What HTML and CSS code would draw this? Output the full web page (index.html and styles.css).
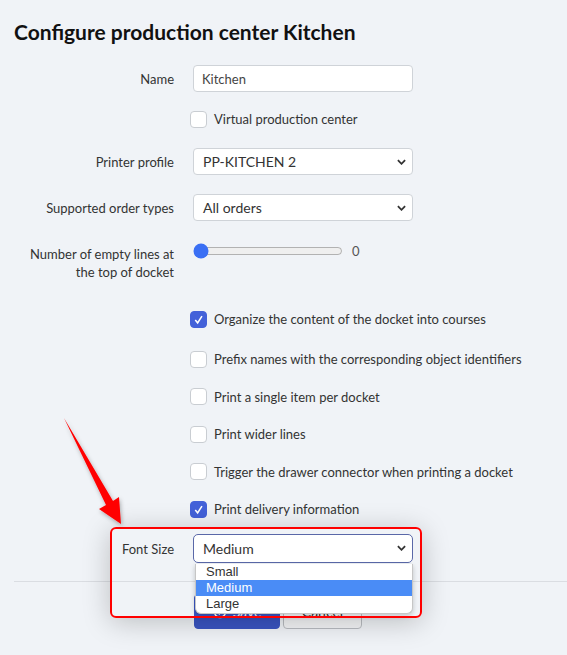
FILE: index.html
```html
<!DOCTYPE html>
<html lang="en">
<head>
    <meta charset="UTF-8">
    <title>Configure production center</title>
    <link rel="stylesheet" href="styles.css">
</head>
<body>
    <h1 class="title">Configure production center Kitchen</h1>

    <form class="form">
        <div class="row row-name">
            <label class="label">Name</label>
            <input class="field" type="text" value="Kitchen">
        </div>
        <div class="row row-check row-virtual">
            <span></span>
            <label class="check"><span class="box"></span>Virtual production center</label>
        </div>
        <div class="row row-select">
            <label class="label">Printer profile</label>
            <div class="select-wrap">
                <div class="field select">PP-KITCHEN 2</div>
                <svg class="chevron" viewBox="0 0 10 6"><path d="M1 1l4 4 4-4" fill="none" stroke="#333" stroke-width="2"/></svg>
            </div>
        </div>
        <div class="row row-select row-orders">
            <label class="label">Supported order types</label>
            <div class="select-wrap">
                <div class="field select">All orders</div>
                <svg class="chevron" viewBox="0 0 10 6"><path d="M1 1l4 4 4-4" fill="none" stroke="#333" stroke-width="2"/></svg>
            </div>
        </div>
        <div class="row row-slider">
            <label class="label">Number of empty lines at the top of docket</label>
            <div class="slider">
                <input class="range" type="range" min="0" max="10" value="0">
                <span class="range-value">0</span>
            </div>
        </div>

        <div class="row row-check row-first">
            <span></span>
            <label class="check"><span class="box checked"><svg viewBox="0 0 12 12"><path d="M3 6.5l2.2 2.6L9.2 2.8" fill="none" stroke="#fff" stroke-width="1.4"/></svg></span>Organize the content of the docket into courses</label>
        </div>
        <div class="row row-check">
            <span></span>
            <label class="check"><span class="box"></span>Prefix names with the corresponding object identifiers</label>
        </div>
        <div class="row row-check">
            <span></span>
            <label class="check"><span class="box"></span>Print a single item per docket</label>
        </div>
        <div class="row row-check">
            <span></span>
            <label class="check"><span class="box"></span>Print wider lines</label>
        </div>
        <div class="row row-check">
            <span></span>
            <label class="check"><span class="box"></span>Trigger the drawer connector when printing a docket</label>
        </div>
        <div class="row row-check row-last">
            <span></span>
            <label class="check"><span class="box checked"><svg viewBox="0 0 12 12"><path d="M3 6.5l2.2 2.6L9.2 2.8" fill="none" stroke="#fff" stroke-width="1.4"/></svg></span>Print delivery information</label>
        </div>
        <div class="row row-font">
            <label class="label">Font Size</label>
            <div class="select-wrap">
                <div class="field select focused">Medium</div>
                <svg class="chevron" viewBox="0 0 10 6"><path d="M1 1l4 4 4-4" fill="none" stroke="#333" stroke-width="2"/></svg>
                <ul class="dropdown">
                    <li>Small</li>
                    <li class="active">Medium</li>
                    <li>Large</li>
                </ul>
            </div>
        </div>
    </form>

    <div class="actions">
        <button class="btn btn-save" type="button">
            <svg viewBox="0 0 14 14"><circle cx="7" cy="7" r="5.5" fill="none" stroke="#fff" stroke-width="1.6"/><path d="M4.5 7l1.8 1.8L9.6 5.4" fill="none" stroke="#fff" stroke-width="1.6"/></svg>
            Save
        </button>
        <button class="btn btn-cancel" type="button">Cancel</button>
    </div>

    <!-- Anotación de la captura -->
    <div class="highlight"></div>
    <svg class="arrow" width="130" height="130" viewBox="0 0 130 130">
        <defs>
            <filter id="sombra" x="-30%" y="-30%" width="160%" height="160%">
                <feDropShadow dx="1" dy="2" stdDeviation="2" flood-color="#000" flood-opacity="0.3"/>
            </filter>
        </defs>
        <polygon filter="url(#sombra)" fill="#ff0000"
                 points="24,18 73,101 79,97 81,124 59,109 66,105"/>
    </svg>
</body>
</html>
```

FILE: styles.css
```css
/* Estilos generales */
body {
    font-family: Lato, "Open Sans", sans-serif;
    background-color: #f0f3f7;
    color: #333;
    margin: 0;
    padding: 19px 0 0 14px;
    height: 636px;
    overflow: hidden;
    position: relative;
}

.title {
    font-size: 21px;
    line-height: 26px;
    font-weight: 700;
    color: #111;
    margin: 0 0 20px;
}

/* Filas del formulario */
.form {
    margin: 0;
}
.row {
    display: grid;
    grid-template-columns: 160px 220px;
    column-gap: 19px;
    align-items: center;
    margin-bottom: 17.5px;
}
.label {
    font-size: 13px;
    line-height: 18px;
    text-align: right;
    color: #333;
}

.field {
    box-sizing: border-box;
    width: 220px;
    height: 27px;
    border: 1px solid #cfd3d8;
    border-radius: 4px;
    background: #fff;
    font-family: Lato, sans-serif;
    font-size: 13px;
    color: #444;
    padding: 0 8px;
    margin: 0;
}

.row-name {
    margin-bottom: 17px;
}
.row-virtual {
    margin-bottom: 19px;
}
.row-select {
    margin-bottom: 19px;
}
.row-orders {
    margin-bottom: 24px;
}

/* Selects */
.select-wrap {
    position: relative;
    width: 220px;
}
.select {
    display: flex;
    align-items: center;
    padding-left: 9px;
    font-size: 14px;
    color: #333;
}
.select.focused {
    height: 29px;
    border-color: #5a68a8;
    border-radius: 5px;
}
.chevron {
    position: absolute;
    right: 7px;
    top: 11px;
    width: 9px;
    height: 6px;
}

/* Deslizador */
.row-slider {
    align-items: start;
    margin-bottom: 28px;
}
.slider {
    display: flex;
    align-items: center;
    gap: 9px;
    margin-top: -2px;
}
.range {
    width: 150px;
    height: 16px;
    margin: 0;
    accent-color: #3a6ff4;
}
.range-value {
    font-size: 13px;
    color: #555;
}

/* Casillas */
.row-check {
    line-height: 20px;
}
.row-first {
    margin-bottom: 20px;
}
.row-check.row-last {
    margin-bottom: 15px;
}
.check {
    display: flex;
    align-items: center;
    gap: 7px;
    font-size: 13px;
    color: #333;
    margin-left: -3px;
    white-space: nowrap;
}
.box {
    box-sizing: border-box;
    width: 17px;
    height: 17px;
    border: 1px solid #c9cdd2;
    border-radius: 4px;
    background: #fff;
    display: flex;
    align-items: center;
    justify-content: center;
    flex: none;
}
.box.checked {
    background: #4361d9;
    border-color: #4361d9;
}
.box svg {
    width: 13px;
    height: 13px;
}

.row-font {
    margin-bottom: 0;
}

/* Lista desplegada */
.dropdown {
    position: absolute;
    left: 2px;
    top: 30px;
    width: 218px;
    box-sizing: border-box;
    margin: 0;
    padding: 0 0 1px;
    list-style: none;
    background: #fff;
    border: 1px solid #c6c6c6;
    border-top: none;
    border-radius: 0 0 6px 6px;
    box-shadow: 0 2px 5px rgba(0, 0, 0, 0.2);
    font-family: "Liberation Sans", Arial, sans-serif;
    font-size: 13px;
    z-index: 3;
}
.dropdown li {
    height: 16px;
    line-height: 16px;
    padding-left: 10px;
    color: #333;
}
.dropdown li.active {
    background: #4a8cf6;
    color: #fff;
}

/* Botones */
.actions {
    border-top: 1px solid #dadde2;
    margin-top: 18px;
    padding: 12px 0 0 180px;
    display: flex;
    gap: 3px;
}
.btn {
    height: 35px;
    border-radius: 4px;
    font-family: Lato, sans-serif;
    font-size: 14px;
    display: flex;
    align-items: center;
    justify-content: center;
    gap: 6px;
}
.btn-save {
    width: 86px;
    background: #3a55c2;
    border: 1px solid #3a55c2;
    color: #fff;
}
.btn-save svg {
    width: 14px;
    height: 14px;
}
.btn-cancel {
    width: 79px;
    background: #f4f5f7;
    border: 1px solid #b9bcc1;
    color: #333;
}

/* Marco rojo y flecha */
.highlight {
    position: absolute;
    left: 110px;
    top: 527px;
    width: 312px;
    height: 91px;
    box-sizing: border-box;
    border: 2px solid #ff0000;
    border-radius: 6px;
    box-shadow: 0 4px 28px rgba(0, 0, 0, 0.22);
    z-index: 4;
}
.arrow {
    position: absolute;
    left: 40px;
    top: 400px;
    z-index: 4;
}
```
